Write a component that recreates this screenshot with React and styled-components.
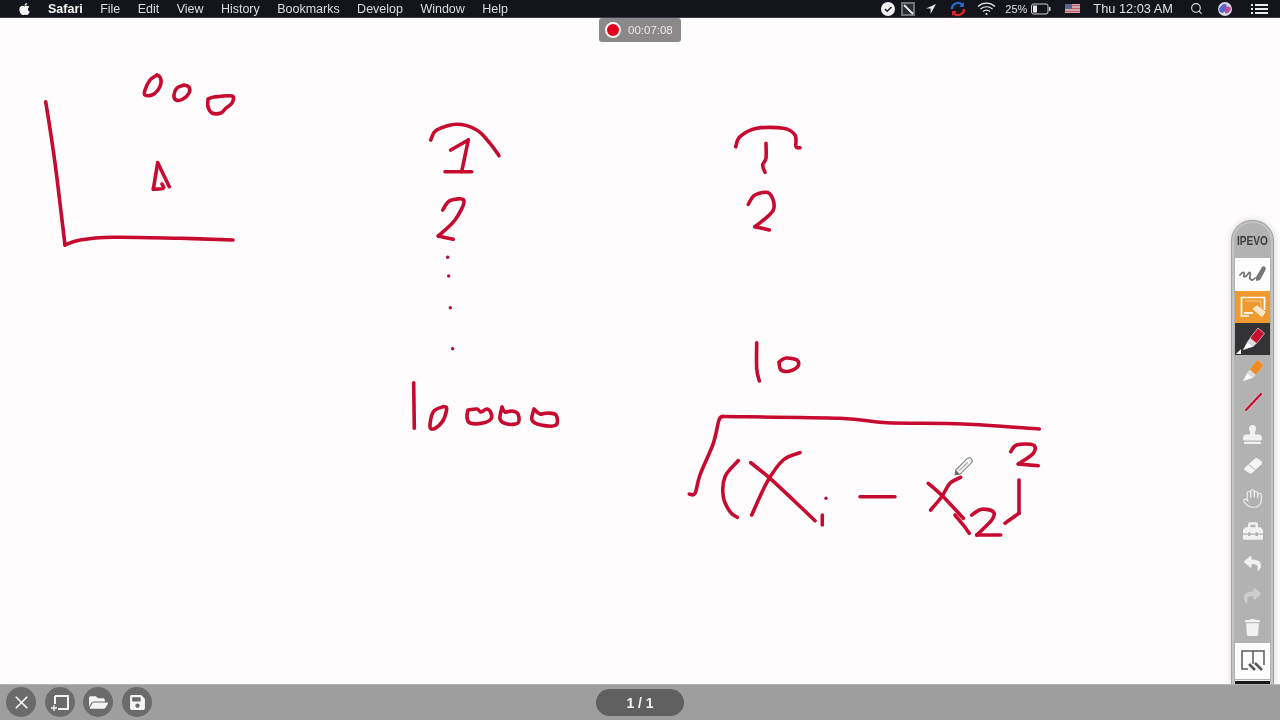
import React from "react";
import styled, { createGlobalStyle } from "styled-components";
import { FaApple, FaFolderOpen, FaSave, FaReply, FaShare, FaTrash, FaStamp, FaToolbox } from "react-icons/fa";
import { Search, X, Hand } from "lucide-react";

const INK = "#c70a30";

// catmull-rom through the hand-traced points, so strokes look drawn
const smooth = (pts) => {
  let d = `M${pts[0][0]} ${pts[0][1]}`;
  for (let i = 0; i < pts.length - 1; i++) {
    const p0 = pts[i - 1] || pts[i];
    const p1 = pts[i];
    const p2 = pts[i + 1];
    const p3 = pts[i + 2] || p2;
    const c1x = p1[0] + (p2[0] - p0[0]) / 6;
    const c1y = p1[1] + (p2[1] - p0[1]) / 6;
    const c2x = p2[0] - (p3[0] - p1[0]) / 6;
    const c2y = p2[1] - (p3[1] - p1[1]) / 6;
    d += ` C${c1x.toFixed(1)} ${c1y.toFixed(1)} ${c2x.toFixed(1)} ${c2y.toFixed(1)} ${p2[0]} ${p2[1]}`;
  }
  return d;
};

const strokes = [
  // axes
  [[45.7,101.7],[55,163],[65,245]],
  [[65,245],[80,240],[113,237.3],[180,238.3],[233,240]],
  [[157,75],[150,80],[145,90],[145,95],[152,95],[158,90],[161,83],[160,77],[157,75]],
  [[184,85],[177,88],[174,95],[176,100],[183,99],[189,93],[189,87],[184,85]],
  [[208,99],[214,97],[232,96],[232,103],[226,108],[221,113],[212,113],[208,107],[208,99]],
  [[157.7,162.7],[153.3,189.3]],
  [[153.3,189.3],[163.3,188.3],[162,184]],
  [[157.7,162.7],[169.3,186.7]],
  // middle column
  [[430.7,140],[436.7,130],[456.7,124.3],[476.7,130],[490,143.3],[499,155.7]],
  [[450.7,150],[468.3,140]],
  [[468.3,140],[461.7,171.7]],
  [[445,171.7],[471.7,171.7]],
  [[442.7,210],[450,200.7],[464,200.7],[455,220],[438.3,236]],
  [[438.3,236],[453.3,239.3]],
  [[413.7,382.7],[414.3,428.3]],
  [[443.3,406.7],[433.3,411.7],[430,426.7],[435,428.3],[443.3,420],[446.7,408.3],[443.3,406.7]],
  [[468,410],[477,409],[481,412],[487,409],[491,413],[491,419],[483,423],[470,423],[467,417],[468,410]],
  [[502,407],[505,412],[512,411],[518,414],[518,423],[507,424],[500,419],[502,407]],
  [[534,409],[540,414],[548,413],[556,415],[556,425],[541,425],[532,420],[534,409]],
  // right column
  [[735.7,146.7],[740,136.7],[756.7,128.3],[783.3,128.3],[795,135],[796,146.7],[800,147.7]],
  [[766,143.3],[766,158.3],[762.7,165],[765,172.3]],
  [[748.3,204.3],[755,195],[769.3,193.3],[773.3,210],[755,226.7]],
  [[755,226.7],[769.3,230]],
  [[756.7,342.7],[756.7,368.3],[759.3,381]],
  [[779,362],[786,358],[797,360],[798,366],[790,371],[781,370],[779,362]],
  // formula
  [[689.3,494],[695,493.3],[700,475],[713.3,443.3],[719,420],[723,416.5]],
  [[723,416.5],[840,418.3],[886.7,422.7],[963.3,424],[1039.3,429]],
  [[738.3,460.7],[725,476.7],[723.3,496.7],[730,511.7],[737.3,517.3]],
  [[750.7,462.7],[770,478.3],[793.3,500],[815,520.7]],
  [[800,452.7],[783.3,460],[767.3,481.7],[751.7,515]],
  [[822.3,515],[822.3,525]],
  [[860,496.7],[895,496.7]],
  [[928.3,483.3],[943.3,496.7],[963.3,518.3]],
  [[960.7,477.3],[950,483.3],[941.7,496.7],[930.7,510]],
  [[955,515],[963.3,525],[969.3,533.3]],
  [[971.7,515],[981.7,509.3],[993.3,511.7],[991.7,520],[976.7,535]],
  [[976.7,535],[1000.7,535]],
  [[1010.7,451.7],[1016.7,445],[1033.3,445],[1033.3,453.3],[1018.3,464]],
  [[1018.3,464],[1038.3,465.7]],
  [[1019,480],[1019,513.3]],
  [[1019,513.3],[1005,523.3]],
];

const dots = [[447.7,257.3],[448.7,276],[450.3,307.7],[452.7,348.7],[826,498.3]];

const menus = ["File", "Edit", "View", "History", "Bookmarks", "Develop", "Window", "Help"];

const GlobalStyle = createGlobalStyle`
  html, body { margin: 0; padding: 0; height: 100%; overflow: hidden; }
  #root { height: 100%; }
`;

const Screen = styled.div`
  width: 1280px;
  height: 720px;
  display: flex;
  flex-direction: column;
  background: #fefcfd;
  font-family: "Liberation Sans", Arial, sans-serif;
  filter: blur(0.45px);
`;

const MenuBar = styled.div`
  height: 17px;
  flex: none;
  display: flex;
  align-items: center;
  justify-content: space-between;
  background: #14151c;
  color: #e4e4e6;
  font-size: 12.5px;
  border-bottom: 1px solid #3a3a40;
  box-sizing: content-box;
`;

const MenuLeft = styled.div`
  display: flex;
  align-items: center;
  padding-left: 18px;
`;

const AppleMark = styled(FaApple)`
  width: 13px;
  height: 14px;
  color: #f2f2f2;
  margin-right: 17px;
`;

const MenuItem = styled.span`
  margin-right: 17.4px;
  font-weight: ${(p) => (p.$active ? 700 : 400)};
  color: ${(p) => (p.$active ? "#f4f4f4" : "#dcdcde")};
`;

const Tray = styled.div`
  display: flex;
  align-items: center;
  padding-right: 12px;
`;

const TrayItem = styled.span`
  display: flex;
  align-items: center;
  margin-left: ${(p) => p.$gap || 0}px;
  font-size: ${(p) => p.$size || 12}px;
  color: #e0e0e2;
`;

const Board = styled.div`
  flex: 1;
  position: relative;
  min-height: 0;
`;

const Sketch = styled.svg`
  display: block;
  width: 100%;
  height: 100%;
`;

const RecordBadge = styled.div`
  position: absolute;
  top: 0;
  left: 599px;
  width: 82px;
  height: 24px;
  display: flex;
  align-items: center;
  gap: 7px;
  padding-left: 5px;
  box-sizing: border-box;
  background: #8b8889;
  border-radius: 3px;
  color: #e9e9e9;
  font-size: 11.5px;
`;

const RecordDot = styled.span`
  width: 12px;
  height: 12px;
  margin-left: 1px;
  border-radius: 50%;
  background: #e2001a;
  border: 2px solid #f6f6f6;
  flex: none;
`;

const ToolRail = styled.div`
  position: absolute;
  top: 202px;
  right: 6px;
  width: 43px;
  height: 464px;
  box-sizing: border-box;
  display: flex;
  flex-direction: column;
  padding: 0 3px;
  background: #b2b2b2;
  border: 1px solid #a0a0a0;
  border-bottom: none;
  border-radius: 21px 21px 0 0;
  box-shadow: 0 0 7px rgba(0, 0, 0, 0.16), inset 0 0 0 2px #c4c4c4;
`;

const RailBrand = styled.div`
  height: 37px;
  flex: none;
  display: flex;
  align-items: flex-end;
  justify-content: center;
  padding-bottom: 10px;
  box-sizing: border-box;
  font-family: "Liberation Sans", sans-serif;
  font-weight: 700;
  font-size: 13px;
  color: #3d3d3f;
  transform: scaleX(0.78);
`;

const Tool = styled.div`
  height: ${(p) => p.$h || 32}px;
  flex: none;
  display: flex;
  align-items: center;
  justify-content: center;
  color: #f1f1f1;
  position: relative;
  background: ${(p) => p.$bg || "transparent"};
  svg { display: block; }
`;

const CornerMark = styled.span`
  position: absolute;
  left: 1px;
  bottom: 1px;
  width: 0;
  height: 0;
  border-style: solid;
  border-width: 0 0 5px 5px;
  border-color: transparent transparent #f2f2f2 transparent;
`;

const RailFoot = styled.div`
  position: absolute;
  left: 3px;
  right: 3px;
  bottom: 0;
  height: 3px;
  background: #18181a;
  border-top: 1px solid #eee;
`;

const BottomBar = styled.div`
  height: 36px;
  flex: none;
  position: relative;
  display: flex;
  align-items: center;
  justify-content: center;
  background: #9f9e9f;
  border-top: 1px solid #b5b4b5;
  box-sizing: border-box;
`;

const ActionGroup = styled.div`
  position: absolute;
  left: 6px;
  top: 2px;
  display: flex;
  gap: 8.7px;
`;

const RoundButton = styled.div`
  width: 30px;
  height: 30px;
  border-radius: 50%;
  background: #6c6b6c;
  color: #f4f4f4;
  display: flex;
  align-items: center;
  justify-content: center;
`;

const PagePill = styled.div`
  width: 88px;
  height: 27px;
  border-radius: 14px;
  background: #616061;
  color: #f2f2f2;
  font-weight: 700;
  font-size: 14px;
  display: flex;
  align-items: center;
  justify-content: center;
`;

const PenGroupIcon = () => (
  <svg width="30" height="22" viewBox="0 0 30 22" fill="none">
    <path d="M2 11c3-4 5-3 4 0s2 2 4-1 3-1 2 2 2 6 5 2" stroke="#777" strokeWidth="1.8" strokeLinecap="round" />
    <path d="M18 13l6-10c1-1 2-1 3 0s1 2 .5 3L22 16l-4 1z" fill="#777" />
  </svg>
);

const SlideIcon = () => (
  <svg width="26" height="22" viewBox="0 0 26 22" fill="none">
    <path d="M9 20H1.5V1.5h23V14" stroke="#fff" strokeWidth="1.7" />
    <path d="M5 5h16v8" stroke="#f7c98e" strokeWidth="1" />
    <path d="M4 17h9" stroke="#fff" strokeWidth="1.7" />
    <path d="M13 13l4-3 8 6-3 4.5z" fill="#fbe3c2" stroke="#fff" strokeWidth="0.9" />
  </svg>
);

// one marker body, colours vary per tool
const MarkerIcon = ({ body, edge = "#fff", size = 24 }) => (
  <svg width={size} height={size} viewBox="0 0 24 24">
    <path d="M9 11l8-10 6.5 5.5-8 10z" fill={body} stroke={edge} strokeWidth="0.6" strokeLinejoin="round" />
    <path d="M9 11l6.5 5.5-3 3-6-5z" fill="#dcdcdc" />
    <path d="M6.5 14.5l6 5L2 23z" fill="#fff" />
  </svg>
);

const ThinPenIcon = () => (
  <svg width="22" height="22" viewBox="0 0 22 22">
    <path d="M19 3L4 19" stroke="#e8c4c8" strokeWidth="3.4" strokeLinecap="round" />
    <path d="M19 3L4 19" stroke="#c40a2e" strokeWidth="2.2" strokeLinecap="round" />
  </svg>
);

const EraserIcon = () => (
  <svg width="22" height="20" viewBox="0 0 22 20">
    <path d="M2.5 12L13 2.5q1.5-1 3 0l3.5 3q1 1.5 0 2.8L10 17q-1.5 1-3 0l-4.5-3q-1-1 0-2z" fill="#f4f4f4" />
    <path d="M6.5 8.5l7 5.5" stroke="#b2b2b2" strokeWidth="1" />
  </svg>
);

const BookIcon = () => (
  <svg width="26" height="24" viewBox="0 0 26 24" fill="none" stroke="#5a5a5a">
    <path d="M8 20H2V2h22v14M13 2v13" strokeWidth="1.5" />
    <path d="M9 15l6 6M15 14l7 7" strokeWidth="2.6" />
  </svg>
);

const SelectIcon = () => (
  <svg width="22" height="19" viewBox="0 0 22 19" fill="none" stroke="#f4f4f4">
    <path d="M6 3h13v13H9" strokeWidth="2" />
    <path d="M6 3v8" strokeWidth="2" />
    <path d="M5 12v6M2 15h6" strokeWidth="1.3" />
  </svg>
);

const SyncIcon = () => (
  <svg width="16" height="16" viewBox="0 0 16 16" fill="none" strokeWidth="2.4">
    <path d="M2 8a6 6 0 0 1 10-4.5" stroke="#2a68c8" />
    <path d="M14 8a6 6 0 0 1-10 4.5" stroke="#d3262c" />
    <path d="M14 1v5H9" fill="#2a68c8" stroke="none" />
    <path d="M2 15v-5h5" fill="#d3262c" stroke="none" />
  </svg>
);

const WifiIcon = () => (
  <svg width="19" height="14" viewBox="0 0 19 14" fill="none" stroke="#e8e8e8" strokeWidth="1.2">
    <path d="M1 4.5c5-4.4 12-4.4 17 0M3.5 7c3.5-3 8.5-3 12 0M6 9.5c2-1.6 5-1.6 7 0" />
    <circle cx="9.5" cy="12" r="1.1" fill="#e8e8e8" stroke="none" />
  </svg>
);

const BatteryIcon = () => (
  <svg width="20" height="12" viewBox="0 0 20 12">
    <rect x="0.5" y="1" width="16.5" height="10" rx="2" fill="none" stroke="#cfcfcf" />
    <rect x="2" y="2.5" width="4" height="7" fill="#e6e6e6" />
    <rect x="18" y="4" width="1.5" height="4" fill="#cfcfcf" />
  </svg>
);

const FlagIcon = () => (
  <svg width="15" height="9" viewBox="0 0 15 9">
    <rect width="15" height="9" fill="#d6c4c8" />
    <path d="M0 1.5h15M0 4.5h15M0 7.5h15" stroke="#c85a68" strokeWidth="1.3" />
    <rect width="7" height="5" fill="#5c6590" />
  </svg>
);

const CheckBadge = () => (
  <svg width="14" height="14" viewBox="0 0 14 14">
    <circle cx="7" cy="7" r="7" fill="#f2f2f2" />
    <path d="M4 7l2.2 2.2L10.5 5" stroke="#1b1b20" strokeWidth="1.5" fill="none" />
  </svg>
);

const CaptureIcon = () => (
  <svg width="14" height="14" viewBox="0 0 14 14">
    <rect width="14" height="14" fill="#6f7278" />
    <rect x="2" y="2" width="10" height="10" fill="#2a2d33" />
    <path d="M3 3l9 9" stroke="#eee" strokeWidth="1.8" />
  </svg>
);

const LocationIcon = () => (
  <svg width="10" height="10" viewBox="0 0 10 10">
    <path d="M10 0L0 4.5h4.6V10z" fill="#e4e4e4" />
  </svg>
);

const SiriIcon = () => (
  <svg width="14" height="14" viewBox="0 0 14 14">
    <circle cx="7" cy="7" r="7" fill="#d6d6de" />
    <path d="M1 7c2-3 3-5 6-5 2 0 2 3 1 5-1 3-3 5-6 3z" fill="#5a63c8" />
    <path d="M7 7c1-3 3-3 6-1-1 4-3 6-6 5z" fill="#c04a9a" />
  </svg>
);

const ListIcon = () => (
  <svg width="17" height="10" viewBox="0 0 17 10" fill="#ececec">
    <rect x="0" y="0" width="2" height="2" />
    <rect x="0" y="4" width="2" height="2" />
    <rect x="0" y="8" width="2" height="2" />
    <rect x="4" y="0" width="13" height="2" />
    <rect x="4" y="4" width="13" height="2" />
    <rect x="4" y="8" width="13" height="2" />
  </svg>
);

const App = () => {
  return (
    <Screen>
      <GlobalStyle />
      <MenuBar>
        <MenuLeft>
          <AppleMark />
          <MenuItem $active>Safari</MenuItem>
          {menus.map((m) => (
            <MenuItem key={m}>{m}</MenuItem>
          ))}
        </MenuLeft>
        <Tray>
          <TrayItem><CheckBadge /></TrayItem>
          <TrayItem $gap={6}><CaptureIcon /></TrayItem>
          <TrayItem $gap={11}><LocationIcon /></TrayItem>
          <TrayItem $gap={14}><SyncIcon /></TrayItem>
          <TrayItem $gap={11}><WifiIcon /></TrayItem>
          <TrayItem $gap={9} $size={11}>25%</TrayItem>
          <TrayItem $gap={4}><BatteryIcon /></TrayItem>
          <TrayItem $gap={14}><FlagIcon /></TrayItem>
          <TrayItem $gap={13} $size={12.8}>Thu 12:03 AM</TrayItem>
          <TrayItem $gap={17}><Search size={13} color="#e0e0e0" /></TrayItem>
          <TrayItem $gap={15}><SiriIcon /></TrayItem>
          <TrayItem $gap={19}><ListIcon /></TrayItem>
        </Tray>
      </MenuBar>

      <Board>
        <Sketch viewBox="0 18 1280 666">
          {strokes.map((pts, i) => (
            <path key={i} d={smooth(pts)} fill="none" stroke={INK} strokeWidth="3.6" strokeLinecap="round" strokeLinejoin="round" />
          ))}
          {dots.map(([x, y]) => (
            <circle key={`${x}-${y}`} cx={x} cy={y} r="1.7" fill="#a81048" />
          ))}
          {/* pencil cursor */}
          <g transform="translate(955 475) rotate(-45)">
            <path d="M0 0l4-3h16a2.6 2.6 0 0 1 0 6H4z" fill="#f4f4f4" stroke="#777" strokeWidth="1" />
            <path d="M6 0h12" stroke="#999" strokeWidth="1" />
            <path d="M0 0l4-3v6z" fill="#666" />
          </g>
        </Sketch>

        <RecordBadge>
          <RecordDot />
          00:07:08
        </RecordBadge>

        <ToolRail>
          <RailBrand>IPEVO</RailBrand>
          <Tool $bg="#fdfdfd" $h={33}><PenGroupIcon /></Tool>
          <Tool $bg="#ef9a2e"><SlideIcon /></Tool>
          <Tool $bg="#333336">
            <MarkerIcon body="#c8102e" />
            <CornerMark />
          </Tool>
          <Tool $h={31}><MarkerIcon body="#ee8a22" edge="#f5b060" size={23} /></Tool>
          <Tool><ThinPenIcon /></Tool>
          <Tool><FaStamp size={19} /></Tool>
          <Tool><EraserIcon /></Tool>
          <Tool $h={33}><Hand size={21} strokeWidth={1.3} /></Tool>
          <Tool><FaToolbox size={20} /></Tool>
          <Tool><FaReply size={17} /></Tool>
          <Tool><FaShare size={17} color="#cdcdcd" /></Tool>
          <Tool><FaTrash size={17} /></Tool>
          <Tool $bg="#fdfdfd" $h={36}><BookIcon /></Tool>
          <RailFoot />
        </ToolRail>
      </Board>

      <BottomBar>
        <ActionGroup>
          <RoundButton><X size={21} strokeWidth={2} /></RoundButton>
          <RoundButton><SelectIcon /></RoundButton>
          <RoundButton><FaFolderOpen size={19} /></RoundButton>
          <RoundButton><FaSave size={17} /></RoundButton>
        </ActionGroup>
        <PagePill>1 / 1</PagePill>
      </BottomBar>
    </Screen>
  );
};

export default App;
